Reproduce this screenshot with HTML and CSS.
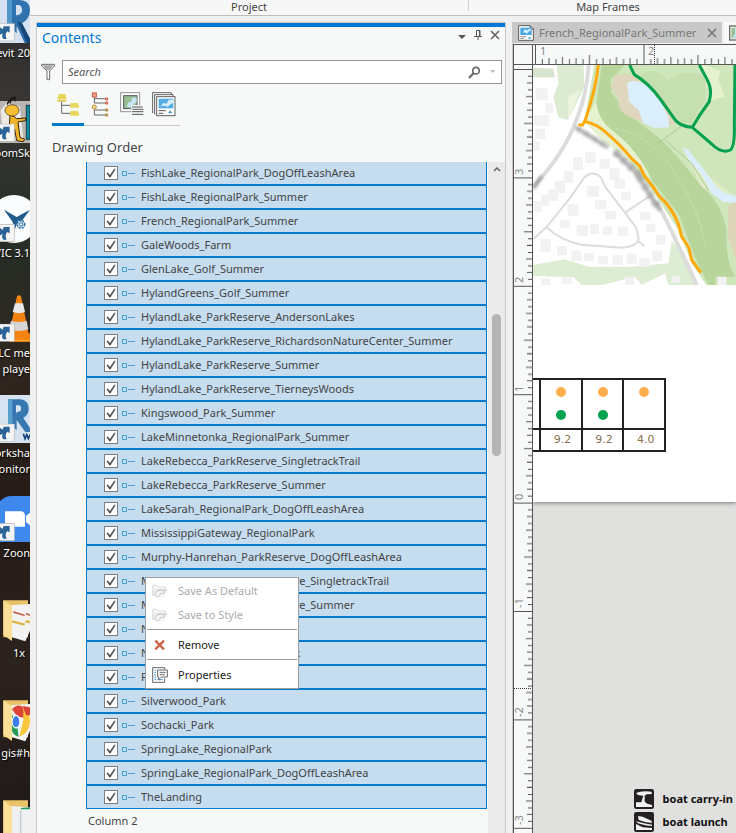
FILE: index.html
```html
<!DOCTYPE html>
<html lang="en">
<head>
<meta charset="utf-8">
<title>Map layout project</title>
<link rel="stylesheet" href="styles.css">
</head>
<body>
<svg class="defs" aria-hidden="true">
  <defs>
    <symbol id="shortcut" viewBox="0 0 45 54">
      <rect x="-10" y="1" width="53" height="52" fill="#f4f4f4" stroke="#b5b5b5" stroke-width="2"/>
      <path d="M0 12 L8 18 L11 9 H29 V28 L22 24 Q13 34 20 47 H10 Q4 40 8 30 L0 34 Z" fill="#2b6397"/>
    </symbol>
    <symbol id="layout-page" viewBox="0 0 48 48">
      <path d="M2 2 H36 L46 12 V46 H2 Z" fill="#fff" stroke="#5c5c5c" stroke-width="3"/>
      <path d="M36 2 V12 H46" fill="none" stroke="#5c5c5c" stroke-width="3"/>
      <rect x="7" y="8" width="34" height="22" fill="#4aa6e0"/>
      <path d="M14 24 L20 13 L28 16 L36 10 L39 16 L32 20 L27 26 L20 22 Z" fill="#d3edfa"/>
      <path d="M7 35 H24 M7 40 H18" stroke="#5c5c5c" stroke-width="2"/>
      <path d="M30 41 L35 34 L40 41 Z" fill="#4aa6e0"/>
    </symbol>
    <symbol id="save-style" viewBox="0 0 48 42">
      <path d="M2 36 V4 H14 L18 9 H40 V16 M2 36 L9 16 H44" fill="#fafafa" stroke="#dcdcdc" stroke-width="3"/>
      <path d="M8 30 Q12 18 26 18 Q38 19 36 28 Q32 32 28 29 Q22 28 24 34 Q22 40 14 38 Q7 36 8 30 Z" fill="#f2f2f2" stroke="#c4c4c4" stroke-width="3"/>
      <path d="M40 12 V28 M33 20 H47 M30 40 L38 32" stroke="#d6d6d6" stroke-width="3"/>
    </symbol>
  </defs>
</svg>

<div class="screen">
  <aside class="desktop" aria-label="Desktop">
    <div class="shortcut">
      <svg viewBox="0 0 90 132" aria-hidden="true">
        <rect y="-12" width="90" height="141" fill="#d5e1f0"/>
        <path d="M22 0 H58 Q90 2 90 30 Q90 56 66 70 L90 116 V129 H74 L50 78 V100 L22 72 Z" fill="#2f72ad"/>
        <path d="M48 15 H58 Q68 20 66 34 Q62 46 48 46 Z" fill="#d5e1f0"/>
        <path d="M22 0 H36 V84 L22 72 Z" fill="#4f97cb"/>
        <path d="M52 64 L66 70 L90 116 V129 H80 Z" fill="#174779"/>
        <use href="#shortcut" x="0" y="70" width="45" height="54"/>
      </svg>
      <span>evit 20</span>
    </div>
    <div class="shortcut">
      <svg viewBox="0 300 90 132" aria-hidden="true">
        <rect y="303" width="90" height="126" fill="#b9b5b1"/>
        <path d="M2 330 L20 310 L60 320 L70 420 L10 420 Z" fill="#ece9e5"/>
        <rect x="79" y="316" width="11" height="102" fill="#138aa0" stroke="#103d49" stroke-width="3"/>
        <path d="M30 345 Q46 350 50 356 L78 354 L76 362 L54 366 L60 412 L74 418 L70 425 L50 422 L44 388 L34 422 L26 418 Z" fill="#f2b52a" stroke="#33230a" stroke-width="3"/>
        <ellipse cx="36" cy="331" rx="21" ry="17" fill="#f7bd33" stroke="#3a2b10" stroke-width="2"/>
        <path d="M22 314 Q25 298 46 291 M30 310 Q34 296 44 293 L46 304" fill="none" stroke="#191410" stroke-width="4"/>
        <use href="#shortcut" x="0" y="371" width="45" height="54"/>
      </svg>
      <span>oomSk</span>
    </div>
    <div class="shortcut">
      <svg viewBox="0 600 90 132" aria-hidden="true">
        <circle cx="42" cy="657" r="72" fill="#fbfcfd"/>
        <path d="M12 629 L50 651 L90 629 L66 662 L54 662 L44 690 L38 666 Z" fill="#215c8d"/>
        <circle cx="63" cy="673" r="11" fill="#e8f2f9" stroke="#2a6ea5" stroke-width="5" stroke-dasharray="6 3"/>
        <circle cx="63" cy="673" r="5" fill="#fff" stroke="#2a6ea5" stroke-width="3"/>
        <use href="#shortcut" x="0" y="672" width="45" height="54"/>
      </svg>
      <span>VIC 3.1</span>
    </div>
    <div class="shortcut">
      <svg viewBox="0 60 90 132" aria-hidden="true">
        <path d="M22 160 H90 V186 H30 Z" fill="#ee7a0b"/>
        <path d="M51 48 Q57 44 63 48 L88 172 Q58 190 26 172 Z" fill="#f58312"/>
        <path d="M45 70 L69 70 L75 96 Q57 103 38 96 Z" fill="#e7e7e7"/>
        <path d="M33 122 Q57 130 80 122 L85 148 Q58 158 27 148 Z" fill="#d5d5d5"/>
        <path d="M44 181 H90" stroke="#ffb43b" stroke-width="3"/>
        <use href="#shortcut" x="0" y="131" width="45" height="54"/>
      </svg>
      <span>LC me</span>
      <span>playe</span>
    </div>
    <div class="shortcut">
      <svg viewBox="0 360 90 132" aria-hidden="true">
        <rect y="345" width="90" height="144" fill="#d7e3f1"/>
        <path d="M24 358 H62 Q86 362 86 386 Q86 404 70 414 L90 444 V456 H76 L50 420 V450 L24 430 Z" fill="#3678af"/>
        <path d="M48 376 H58 Q66 380 62 392 L48 398 Z" fill="#d7e3f1"/>
        <path d="M24 358 H37 V440 L24 430 Z" fill="#57a0d0"/>
        <path d="M70 461 L75 476 L80 464 L85 476 L90 464" fill="none" stroke="#174779" stroke-width="5"/>
        <use href="#shortcut" x="0" y="431" width="45" height="54"/>
      </svg>
      <span>orksha</span>
      <span>onitor</span>
    </div>
    <div class="shortcut">
      <svg viewBox="0 660 90 132" aria-hidden="true">
        <path d="M0 664 Q14 648 36 648 H90 V786 H0 Z" fill="#3f88ee"/>
        <path d="M15 694 H64 Q75 696 75 708 V740 H28 Q15 738 15 726 Z" fill="#fff"/>
        <path d="M78 708 L90 698 V736 L78 726 Z" fill="#fff"/>
        <use href="#shortcut" x="0" y="729" width="45" height="54"/>
      </svg>
      <span>Zoon</span>
    </div>
    <div class="shortcut">
      <svg viewBox="0 120 90 132" aria-hidden="true">
        <path d="M10 121 H84 V232 H10 Z" fill="#e9c268"/>
        <path d="M30 136 L90 132 V212 L76 244 L36 232 Z" fill="#f3f3f3"/>
        <path d="M40 156 L74 166 M78 160 L90 166" stroke="#c2502c" stroke-width="4"/>
        <path d="M36 184 L74 194 M76 184 L90 186" stroke="#dbb646" stroke-width="7"/>
        <path d="M10 121 L36 138 V243 L10 225 Z" fill="#fbdf96"/>
      </svg>
      <span class="mid">1x</span>
    </div>
    <div class="shortcut">
      <svg viewBox="0 420 90 132" aria-hidden="true">
        <path d="M10 421 H84 V532 H10 Z" fill="#e9c268"/>
        <path d="M30 436 L90 432 V512 L76 544 L36 532 Z" fill="#f3f3f3"/>
        <path d="M36 448 Q50 430 68 440 L80 474 L52 470 Z" fill="#dc4437"/>
        <path d="M36 462 L52 500 L56 530 Q40 526 36 512 Z" fill="#239d58"/>
        <path d="M70 444 Q90 450 90 486 Q88 520 58 530 L70 480 Z" fill="#f8c73c"/>
        <path d="M68 438 L90 442 V466 L78 466 Z" fill="#dc4437"/>
        <ellipse cx="48" cy="485" rx="13" ry="21" fill="#fff"/>
        <ellipse cx="48" cy="485" rx="10" ry="17" fill="#3e7ee8"/>
        <path d="M10 421 L36 438 V543 L10 525 Z" fill="#fbdf96"/>
      </svg>
      <span>gis#h</span>
    </div>
    <div class="shortcut">
      <svg viewBox="0 720 90 132" aria-hidden="true">
        <path d="M10 721 H84 V852 H10 Z" fill="#e9c268"/>
        <path d="M32 738 L90 742 V852 H32 Z" fill="#eef0f1"/>
        <path d="M62 744 L90 742 V748 L64 748 Z" fill="#1c9a57"/>
        <path d="M62 752 V852" stroke="#b9c1c5" stroke-width="3"/>
        <path d="M10 721 L36 742 V852 H10 Z" fill="#fbdf96"/>
      </svg>
    </div>
  </aside>

  <main class="app">
    <header class="ribbon">
      <span class="ribbon-group project">Project</span>
      <span class="ribbon-group frames">Map Frames</span>
    </header>

    <div class="workspace">
      <section class="contents" aria-labelledby="contents-title">
        <div class="pane-head">
          <h1 id="contents-title">Contents</h1>
          <div class="pane-tools">
            <button type="button" aria-label="Pane options"><svg width="8" height="12" viewBox="0 0 8 12"><path d="M0 6 H8 L4 10 Z" fill="#555"/></svg></button>
            <button type="button" aria-label="Auto hide"><svg width="8" height="12" viewBox="0 0 8 12"><path d="M2.500 7 V1.500 H6 V7 M5.500 1 V7 M0 7.500 H8 M4 8 V11" fill="none" stroke="#555"/></svg></button>
            <button type="button" aria-label="Close pane"><svg width="10" height="12" viewBox="0 0 10 12"><path d="M1 2 L9 10 M9 2 L1 10" fill="none" stroke="#666" stroke-width="1.700"/></svg></button>
          </div>
        </div>

        <div class="search-row">
          <svg class="funnel" width="14" height="18" viewBox="0 0 42 54" aria-hidden="true"><path d="M2 4 H40 V9 L26 24 V50 H18 V24 L2 9 Z" fill="#fff" stroke="#6b6b6b" stroke-width="3"/><path d="M4 7 H38 L25 22 H18 Z" fill="#a8a9ac"/></svg>
          <div class="search-box">
            <input type="text" placeholder="Search" aria-label="Search">
            <button type="button" aria-label="Run search"><svg width="13" height="13" viewBox="0 0 39 39"><circle cx="24" cy="14" r="10" fill="none" stroke="#666" stroke-width="5"/><path d="M17 21 L3 36" stroke="#666" stroke-width="6"/></svg></button>
            <button type="button" aria-label="Search options"><svg width="5" height="4" viewBox="0 0 5 4"><path d="M0 0 H5 L3 3 Z" fill="#bbb"/></svg></button>
          </div>
        </div>

        <div class="views" role="tablist">
          <button type="button" role="tab" aria-selected="true" aria-label="List by drawing order">
            <svg width="24" height="26" viewBox="0 0 72 78"><path d="M17 30 V67 H44 M17 43 H44" fill="none" stroke="#666" stroke-width="3"/><path d="M8 9 H28 L32 24 H4 Z M44 36 H66 L70 50 H42 Z M44 60 H66 L70 74 H42 Z" fill="#e8d659"/><path d="M4 26 H31 V32 H4 Z" fill="#e1c747"/></svg>
          </button>
          <button type="button" role="tab" aria-selected="false" aria-label="List by source">
            <svg width="24" height="26" viewBox="0 0 72 78"><path d="M19 20 V36 H54 M19 23 H54 M19 56 V72 H54 M19 57 H54" fill="none" stroke="#666" stroke-width="3"/><rect x="13" y="6" width="12" height="12" fill="#f3a48f" stroke="#c9543a" stroke-width="3"/><circle cx="19" cy="48" r="6" fill="#f3dd90" stroke="#bb8c3b" stroke-width="3"/><path d="M53 21 h6 v6 h-6 Z M53 33 h6 v6 h-6 Z" fill="#fbd8ce" stroke="#c9543a" stroke-width="3"/><path d="M53 54 h6 v6 h-6 Z M53 69 h6 v6 h-6 Z" fill="#f8edc9" stroke="#a87b33" stroke-width="3"/></svg>
          </button>
          <button type="button" role="tab" aria-selected="false" aria-label="List map frames">
            <svg width="24" height="26" viewBox="0 0 72 78"><rect x="2" y="5" width="57" height="57" fill="#fff" stroke="#919191" stroke-width="3"/><rect x="11" y="14" width="40" height="39" fill="#96bf93" stroke="#555" stroke-width="3"/><path d="M20 46 L26 34 L34 32 L36 20 H50 V34 L42 38 L30 50 Z" fill="#c7e6f6"/><path d="M34 42 H72 V76 H34 Z" fill="#f7f9f9"/><path d="M36 48 H68 M38 55 H70 M36 62 H70 M36 70 H70" stroke="#555" stroke-width="3"/></svg>
          </button>
          <button type="button" role="tab" aria-selected="false" aria-label="List map series">
            <svg width="24" height="26" viewBox="0 0 72 78"><path d="M2 66 V5 H58 V12 M8 70 V11 H63 V18" fill="#fff" stroke="#5f5f5f" stroke-width="3"/><rect x="14" y="17" width="55" height="57" fill="#fff" stroke="#5f5f5f" stroke-width="3"/><rect x="20" y="23" width="44" height="29" fill="#55aee3"/><path d="M26 46 L34 36 L44 38 L50 26 H64 V36 L52 42 L48 48 L38 44 Z" fill="#d3edfa"/><path d="M20 59 H42 M20 67 H34" stroke="#555" stroke-width="3"/><path d="M48 67 L55 58 L61 67 Z" fill="#3e97cf"/></svg>
          </button>
        </div>

        <h2>Drawing Order</h2>

        <div class="tree">
          <div class="tree-body">
            <ul class="layers">
              <li><label><input type="checkbox" checked><i></i>FishLake_RegionalPark_DogOffLeashArea</label></li>
              <li><label><input type="checkbox" checked><i></i>FishLake_RegionalPark_Summer</label></li>
              <li><label><input type="checkbox" checked><i></i>French_RegionalPark_Summer</label></li>
              <li><label><input type="checkbox" checked><i></i>GaleWoods_Farm</label></li>
              <li><label><input type="checkbox" checked><i></i>GlenLake_Golf_Summer</label></li>
              <li><label><input type="checkbox" checked><i></i>HylandGreens_Golf_Summer</label></li>
              <li><label><input type="checkbox" checked><i></i>HylandLake_ParkReserve_AndersonLakes</label></li>
              <li><label><input type="checkbox" checked><i></i>HylandLake_ParkReserve_RichardsonNatureCenter_Summer</label></li>
              <li><label><input type="checkbox" checked><i></i>HylandLake_ParkReserve_Summer</label></li>
              <li><label><input type="checkbox" checked><i></i>HylandLake_ParkReserve_TierneysWoods</label></li>
              <li><label><input type="checkbox" checked><i></i>Kingswood_Park_Summer</label></li>
              <li><label><input type="checkbox" checked><i></i>LakeMinnetonka_RegionalPark_Summer</label></li>
              <li><label><input type="checkbox" checked><i></i>LakeRebecca_ParkReserve_SingletrackTrail</label></li>
              <li><label><input type="checkbox" checked><i></i>LakeRebecca_ParkReserve_Summer</label></li>
              <li><label><input type="checkbox" checked><i></i>LakeSarah_RegionalPark_DogOffLeashArea</label></li>
              <li><label><input type="checkbox" checked><i></i>MississippiGateway_RegionalPark</label></li>
              <li><label><input type="checkbox" checked><i></i>Murphy-Hanrehan_ParkReserve_DogOffLeashArea</label></li>
              <li><label><input type="checkbox" checked><i></i>Murphy-Hanrehan_ParkReserve_SingletrackTrail</label></li>
              <li><label><input type="checkbox" checked><i></i>Murphy-Hanrehan_ParkReserve_Summer</label></li>
              <li><label><input type="checkbox" checked><i></i>Noerenberg_Gardens</label></li>
              <li><label><input type="checkbox" checked><i></i>NorthMississippi_RegionalPark</label></li>
              <li><label><input type="checkbox" checked><i></i>Parkers_Park</label></li>
              <li><label><input type="checkbox" checked><i></i>Silverwood_Park</label></li>
              <li><label><input type="checkbox" checked><i></i>Sochacki_Park</label></li>
              <li><label><input type="checkbox" checked><i></i>SpringLake_RegionalPark</label></li>
              <li><label><input type="checkbox" checked><i></i>SpringLake_RegionalPark_DogOffLeashArea</label></li>
              <li><label><input type="checkbox" checked><i></i>TheLanding</label></li>
            </ul>
            <p class="column-name">Column 2</p>

            <div class="menu" role="menu">
              <button type="button" role="menuitem" disabled><svg width="16" height="14"><use href="#save-style"/></svg>Save As Default</button>
              <button type="button" role="menuitem" disabled><svg width="16" height="14"><use href="#save-style"/></svg>Save to Style</button>
              <hr>
              <button type="button" role="menuitem"><svg width="16" height="16" viewBox="0 0 48 48"><path d="M10 11 L36 37 M36 11 L10 37" stroke="#cb6546" stroke-width="7"/></svg>Remove</button>
              <hr>
              <button type="button" role="menuitem"><svg width="16" height="16" viewBox="0 0 48 48"><path d="M38 8 V2 H2 V46 H38 V34" fill="#fff" stroke="#666" stroke-width="3"/><path d="M7 10 h5 M7 17 h5 M7 24 h5 M7 31 h5 M7 38 h5 M16 38 h16" stroke="#3e97cf" stroke-width="3"/><path d="M17 9 H46 V30 H28 L20 38 V30 H17 Z" fill="#fff" stroke="#666" stroke-width="3"/><path d="M23 16 H41 M23 23 H38" stroke="#666" stroke-width="3"/></svg>Properties</button>
            </div>
          </div>
          <div class="scrollbar" aria-hidden="true">
            <svg width="8" height="5" viewBox="0 0 8 5"><path d="M1 4 L4 1 L7 4" fill="none" stroke="#666" stroke-width="1.500"/></svg>
            <div class="thumb"></div>
          </div>
        </div>
      </section>

      <section class="document" aria-label="Layout view">
        <div class="doc-tabs" role="tablist">
          <div class="doc-tab" role="tab" aria-selected="true">
            <svg width="16" height="16" aria-hidden="true"><use href="#layout-page"/></svg>
            <span>French_RegionalPark_Summer</span>
            <button type="button" aria-label="Close tab"><svg width="10" height="10" viewBox="0 0 10 10"><path d="M1 1 L9 9 M9 1 L1 9" stroke="#777" stroke-width="1.700"/></svg></button>
          </div>
          <div class="doc-tab next" role="tab" aria-selected="false">
            <svg width="16" height="16" viewBox="0 0 48 48" aria-hidden="true"><rect x="2" y="3" width="44" height="42" fill="#fff" stroke="#666" stroke-width="4"/><rect x="7" y="8" width="34" height="32" fill="#96bf93"/><path d="M10 38 L18 26 V10 L40 8 V38 Z" fill="#c7e6f6"/></svg>
          </div>
        </div>

        <div class="layout-view">
          <div class="corner"></div>
          <svg class="ruler-top" aria-hidden="true">
            <defs>
              <pattern id="ticks-x" x="2" y="0" width="108.500" height="19" patternUnits="userSpaceOnUse">
                <path d="M.5 0 V19 M7.300 14 V19 M14 13 V19 M21 14 V19 M27.500 12 V19 M34.500 14 V19 M41 13 V19 M48 14 V19 M54.500 10 V19 M61.500 14 V19 M68 13 V19 M75 14 V19 M81.500 12 V19 M88.500 14 V19 M95 13 V19 M102 14 V19" stroke="#555"/>
              </pattern>
            </defs>
            <rect width="100%" height="19" fill="url(#ticks-x)"/>
            <path d="M121.500 0 V19" stroke="#333" stroke-dasharray="1 1"/>
            <text x="7" y="10">1</text>
            <text x="115" y="10">2</text>
          </svg>
          <svg class="ruler-left" aria-hidden="true">
            <defs>
              <pattern id="ticks-y" x="0" y="4" width="19" height="108.400" patternUnits="userSpaceOnUse">
                <path d="M0 .5 H19 M14 7.300 H19 M13 14 H19 M14 21 H19 M12 27.500 H19 M14 34.500 H19 M13 41 H19 M14 48 H19 M10 54.500 H19 M14 61.500 H19 M13 68 H19 M14 75 H19 M12 81.500 H19 M14 88.500 H19 M13 95 H19 M14 102 H19" stroke="#555"/>
              </pattern>
            </defs>
            <rect width="19" height="100%" fill="url(#ticks-y)"/>
            <path d="M0 623.500 H19" stroke="#333" stroke-dasharray="1 1"/>
            <text transform="translate(9 110) rotate(-90)">3</text>
            <text transform="translate(9 218) rotate(-90)">2</text>
            <text transform="translate(9 327) rotate(-90)">1</text>
            <text transform="translate(9 435) rotate(-90)">0</text>
            <text transform="translate(9 543) rotate(-90)">-1</text>
            <text transform="translate(9 652) rotate(-90)">-2</text>
            <text transform="translate(9 760) rotate(-90)">-3</text>
          </svg>

          <div class="canvas">
            <div class="page">
              <svg class="map" viewBox="84 195 609 660" preserveAspectRatio="xMinYMin slice" role="img" aria-label="Park trail map">
                <defs>
                  <filter id="soft" x="-20%" y="-20%" width="140%" height="140%"><feGaussianBlur stdDeviation="4"/></filter>
                  <filter id="haze"><feGaussianBlur stdDeviation="2"/></filter>
                </defs>
                <rect x="84" y="195" width="609" height="660" fill="#fff"/>
                <path d="M268 195 H693 V855 H604 L560 790 L520 690 L455 590 L330 430 L238 362 Z" fill="#cfe6bb"/>
                <path d="M236 362 L276 300 L300 350 L400 420 L440 540 L400 500 L290 420 Z" fill="#e6f1cf"/>
                <g filter="url(#haze)">
                  <path d="M290 195 L274 310 Q280 360 320 390 Q400 450 440 540 L520 640 L570 770 L610 855 H632 V830 L690 830 Q660 780 665 690 Q650 610 590 560 Q520 470 470 420 L380 350 L320 280 L316 240 L360 195 Z" fill="#b8d59c"/>
                  <path d="M330 225 Q380 215 400 240 L480 320 L510 370 L480 384 L420 370 L375 350 Q330 330 345 300 L318 262 Z" fill="#e0d5bd"/>
                  <path d="M400 230 Q440 190 490 240 Q540 200 600 230 L600 300 L560 370 L520 366 L470 296 Z" fill="#c5dfae"/>
                  <path d="M583 195 H650 L640 240 L660 290 L620 300 L600 240 Z" fill="#e4f2cd"/>
                  <path d="M600 195 L650 215 L693 300 V195 Z" fill="#d0e7bb"/>
                  <path d="M530 440 L600 520 L693 590 V620 L650 590 L590 560 Z" fill="#dfebc4"/>
                  <path d="M670 620 L693 600 V780 L668 710 Z" fill="#ded5b8"/>
                  <path d="M155 195 H236 L238 260 L210 320 L188 360 L160 352 L145 290 L160 250 Z" fill="#dcebd2"/>
                  <path d="M84 203 L144 206 L150 232 L84 232 Z" fill="#d6e5cf"/>
                  <path d="M84 795 L180 778 L250 800 L380 800 L490 790 L500 724 L540 760 L570 855 H490 L480 820 L410 855 L390 830 L290 855 H230 L205 832 L84 828 Z" fill="#ddedd4"/>
                  <path d="M190 290 L226 270 L190 360 Z" fill="#edf4dd"/>
                </g>
                <path d="M366 250 Q385 235 410 250 L440 258 L470 310 L490 352 L492 382 L450 384 L415 370 L400 330 L372 305 Z" fill="#daeefb"/>
                <path d="M532 440 L550 450 L598 510 L632 558 L660 580 L693 588 V608 L655 606 L620 580 L590 524 L552 480 Z" fill="#daeefb"/>
                <g fill="none" stroke="#c6deae" stroke-width="3"><path d="M330 385 Q450 410 510 520 Q590 640 600 740"/><path d="M460 430 L540 370 M480 420 L560 490 L610 570" stroke="#acca91"/></g>
                <g fill="#f2f2f2">
                  <path d="M92 265h36v36h-36Z M121 309h24v30h-24Z M86 346h46v32h-46Z M90 386h30v32h-30Z M84 424h20v28h-20Z M240 457h32v32h-32Z M204 472h30v38h-30Z M284 476h30v30h-30Z M178 513h26v35h-26Z M246 558h36v32h-36Z M150 542h30v37h-30Z M313 503h30v36h-30Z M129 568h30v35h-30Z M86 603h24v34h-24Z M108 585h24v32h-24Z M188 612h32v35h-32Z M270 601h34v26h-34Z M328 538h32v28h-32Z M348 575h30v26h-30Z M300 632h32v26h-32Z M165 660h30v24h-30Z M405 637h32v24h-32Z M256 672h26v30h-26Z M215 676h34v32h-34Z M293 680h28v26h-28Z M338 680h30v28h-30Z M423 672h28v24h-28Z M454 704h28v30h-28Z M106 717h32v38h-32Z M156 738h30v28h-30Z M199 752h30v30h-30Z M238 760h28v24h-28Z M279 767h30v26h-30Z M322 766h32v28h-32Z M442 752h30v32h-30Z M365 761h30v30h-30Z M403 774h32v26h-32Z M108 835h28v20h-28Z M170 832h30v20h-30Z M360 832h28v22h-28Z M638 830h26v25h-26Z M500 828h26v20h-26Z"/>
                </g>
                <g fill="none" stroke="#dcdcdc" stroke-linejoin="round">
                  <path d="M251 195 Q246 280 218 350 Q180 460 84 560" stroke-width="12"/>
                  <path d="M84 718 L124 682 L192 598 L238 532 Q260 510 286 530 L302 562 L360 638 L394 684 L401 718 Q396 740 350 743 L230 734 Q170 724 124 682 M360 638 L432 590 M398 722 L418 738" stroke-width="6"/>
                  <path d="M456 606 L496 686 L576 855" stroke-width="12"/>
                </g>
                <g fill="none" stroke="#888" stroke-linecap="round" filter="url(#soft)" opacity=".7">
                  <path d="M218 386 L306 440" stroke-width="15" stroke-dasharray="7 21"/>
                  <path d="M218 386 L306 440 M334 460 L400 524 M404 534 L462 628 M88 562 L108 532" stroke-width="11"/>
                  <path d="M334 460 L400 524 M404 534 L462 628" stroke-width="20" stroke-dasharray="5 24"/>
                </g>
                <g fill="none" stroke="#ffa90a" stroke-width="9" stroke-linejoin="round">
                  <path d="M280 195 Q272 270 240 362 L232 376 L220 373 M240 364 Q280 374 306 400 Q350 438 380 476 L404 498 L420 530 L444 560 L462 588 Q500 620 520 672 L530 710 L552 744 L560 780 L588 818"/>
                </g>
                <g fill="none" stroke="#05a04e" stroke-width="9" stroke-linejoin="round">
                  <path d="M374 195 L388 224 Q430 248 468 300 L512 362 Q530 380 562 382 M583 195 L606 238 Q624 270 612 306 Q586 340 562 382 L620 432 Q650 462 676 450 Q690 440 688 370 L690 195"/>
                </g>
              </svg>

              <table class="trails">
                <tbody>
                  <tr class="marks">
                    <td></td>
                    <td><span class="dot orange"></span><span class="dot green"></span></td>
                    <td><span class="dot orange"></span><span class="dot green"></span></td>
                    <td><span class="dot orange"></span></td>
                  </tr>
                  <tr class="miles"><td></td><td>9.2</td><td>9.2</td><td>4.0</td></tr>
                </tbody>
              </table>
            </div>

            <ul class="legend">
              <li><svg width="20" height="20" viewBox="0 0 60 60" aria-hidden="true"><rect width="60" height="60" rx="7" fill="#252122"/><path d="M6 12 Q24 4 52 8 L54 15 L38 16 L32 20 V38 L40 44 L54 48 V54 H6 V40 L22 40 L28 20 L12 18 Z" fill="#f2f2f2"/></svg>boat carry-in</li>
              <li><svg width="20" height="20" viewBox="0 0 60 60" aria-hidden="true"><rect width="60" height="60" rx="7" fill="#252122"/><path d="M12 12 L26 14 L52 26 L54 33 L34 30 L14 24 Z M6 28 L30 34 L54 38 V42 L34 40 L12 34 Z M6 36 L26 46 L54 48 V54 H6 Z" fill="#f2f2f2"/></svg>boat launch</li>
            </ul>
          </div>
        </div>
      </section>
    </div>
  </main>
</div>
</body>
</html>
```

FILE: styles.css
```css
* {
  box-sizing: border-box;
}

body {
  margin: 0;
  font: 11px/16px "Noto Sans", "Open Sans", sans-serif;
  color: #444;
  background: #f0f0f0;
}

button {
  margin: 0;
  padding: 0;
  border: 0;
  background: none;
  font: inherit;
  color: inherit;
}

svg {
  display: block;
  flex: none;
}

h1, h2, p, ul {
  margin: 0;
  padding: 0;
  font-weight: 400;
  list-style: none;
}

.defs {
  position: absolute;
  width: 0;
  height: 0;
}

.screen {
  display: grid;
  grid-template-columns: 30px 1fr;
  height: 100vh;
  overflow: hidden;
}

/* Desktop strip */
.desktop {
  overflow: hidden;
  background: linear-gradient(175deg, #2c2c2a, #393735 12%, #262d26 30%, #30261f 45%, #241b17 60%, #2c221e 80%, #1e1917);
}

.shortcut {
  display: flex;
  flex-direction: column;
  align-items: flex-end;
  height: 100px;
  color: #fff;
  text-shadow: 1px 1px 2px #000;
}

.shortcut svg {
  width: 30px;
  height: 44px;
  margin-bottom: 1px;
  overflow: visible;
}

.shortcut span {
  white-space: nowrap;
}

.shortcut .mid {
  padding-right: 5px;
}

/* Application frame */
.app {
  display: flex;
  flex-direction: column;
  min-width: 0;
  min-height: 0;
}

.ribbon {
  display: flex;
  height: 16px;
  background: #f7f7f7;
  border-bottom: 1px solid #bdbdbd;
}

.ribbon-group {
  line-height: 14px;
  text-align: center;
}

.project {
  width: 439px;
  height: 11px;
  border-right: 1px solid #d0d0d0;
}

.frames {
  flex: 1;
  padding-left: 11px;
}

.workspace {
  display: grid;
  grid-template-columns: 470px 1fr;
  gap: 6px;
  flex: 1;
  min-height: 0;
  padding: 6px 0 0 6px;
}

/* Contents pane */
.contents {
  display: flex;
  flex-direction: column;
  min-height: 0;
  background: #f7f9f9;
  border: 1px solid #c8c8c8;
  border-bottom: 0;
}

.pane-head {
  display: flex;
  justify-content: space-between;
  height: 37px;
  padding: 0 5px;
  border-top: 4px solid #0077d4;
}

.pane-head h1 {
  font-size: 14px;
  line-height: 21px;
  color: #0077d4;
}

.pane-tools {
  display: flex;
  gap: 8px;
  height: 16px;
}

.search-row {
  display: flex;
  align-items: center;
  gap: 7px;
  padding: 0 3px 0 4px;
}

.search-box {
  display: flex;
  align-items: center;
  gap: 9px;
  flex: 1;
  height: 24px;
  padding: 0 6px 0 5px;
  border: 1px solid #949494;
  background: #fff;
}

.search-box input {
  flex: 1;
  min-width: 0;
  padding: 0;
  border: 0;
  outline: 0;
  font: inherit;
  background: none;
}

.search-box input::placeholder {
  font-style: italic;
  color: #555;
}

.views {
  display: flex;
  align-self: flex-start;
  margin: 7px 0 0 15px;
  border-bottom: 1px solid #c8c8c8;
}

.views button {
  display: flex;
  justify-content: center;
  width: 32px;
  height: 34px;
}

.views button[aria-selected="true"] {
  border-bottom: 3px solid #0079c8;
  height: 35px;
  margin-bottom: -1px;
}

.contents h2 {
  padding: 11px 15px 5px;
  font-size: 13px;
  line-height: 20px;
}

.tree {
  display: flex;
  flex: 1;
  min-height: 0;
  overflow: hidden;
}

.tree-body {
  position: relative;
  flex: 1;
  padding: 0 1px 0 49px;
}

/* The list is scrolled, so its first edge lies above the view. */
.layers {
  margin-top: -1px;
}

.layers li {
  height: 24px;
  border: 1px solid #007ac8;
  background: #c6dcef;
}

.layers label {
  display: flex;
  align-items: center;
  height: 22px;
  padding-left: 17px;
  white-space: nowrap;
}

.layers input {
  appearance: none;
  width: 14px;
  height: 14px;
  margin: 0 4px 0 0;
  border: 1px solid #7f7f7f;
  background: #fff;
}

.layers input::before {
  content: "";
  display: block;
  width: 12px;
  height: 12px;
}

.layers input:checked::before {
  background: #555;
  clip-path: polygon(12% 52%, 22% 44%, 41% 66%, 78% 12%, 88% 18%, 45% 88%, 37% 88%);
}

.layers i {
  display: flex;
  align-items: center;
  width: 13px;
  height: 5px;
  margin-right: 6px;
}

.layers i::before {
  content: "";
  box-sizing: border-box;
  width: 5px;
  height: 5px;
  border: 1px solid #4aa3dc;
  margin-right: 1px;
}

.layers i::after {
  content: "";
  width: 7px;
  height: 1px;
  background: #4aa3dc;
}

.column-name {
  padding: 4px 2px;
}

.menu {
  position: absolute;
  left: 108px;
  top: 415px;
  width: 154px;
  padding: 1px;
  border: 1px solid #9e9e9e;
  background: #fff;
  color: #222;
}

.menu button {
  display: flex;
  align-items: center;
  gap: 10px;
  width: 100%;
  height: 24px;
  padding-left: 5px;
}

.menu button:disabled {
  color: #ababab;
}

.menu hr {
  height: 1px;
  margin: 2px 0 3px;
  border: 0;
  background: #999;
}

.scrollbar {
  display: flex;
  flex-direction: column;
  align-items: center;
  width: 17px;
  padding-top: 5px;
  background: #eaeaea;
}

.thumb {
  width: 9px;
  height: 142px;
  margin-top: 142px;
  border-radius: 5px;
  background: #b4b4b4;
}

/* Layout view */
.document {
  display: flex;
  flex-direction: column;
  min-width: 0;
  min-height: 0;
  border-left: 1px solid #c8c8c8;
}

.doc-tabs {
  display: flex;
  gap: 2px;
  height: 22px;
  overflow: hidden;
}

.doc-tab {
  display: flex;
  align-items: center;
  gap: 5px;
  flex: none;
  height: 21px;
  padding: 0 5px;
  background: #c8c8c8;
  color: #777;
}

.doc-tab button {
  margin-left: 6px;
}

.doc-tab.next {
  background: #f7f9f9;
}

.layout-view {
  display: grid;
  grid-template-columns: 20px 1fr;
  grid-template-rows: 21px 1fr;
  flex: 1;
  min-height: 0;
  background: #f7f9f9;
}

.corner,
.ruler-top {
  border-top: 1px solid #555;
  border-bottom: 1px solid #555;
}

.corner,
.ruler-left {
  border-left: 1px solid #555;
  border-right: 1px solid #555;
}

.ruler-top {
  width: 100%;
  height: 21px;
}

.ruler-left {
  width: 20px;
  height: 100%;
}

.layout-view text {
  font-size: 11px;
  fill: #888;
}

.canvas {
  display: flex;
  flex-direction: column;
  min-width: 0;
  min-height: 0;
  overflow: hidden;
  background: #e0e0df;
}

.page {
  padding-bottom: 50px;
  background: #fff;
  box-shadow: 0 1px 4px #777;
}

.map {
  width: 100%;
  height: 220px;
}

.trails {
  width: 133px;
  margin-top: 93px;
  table-layout: fixed;
  border-collapse: collapse;
  font: 11px/16px "DejaVu Sans", sans-serif;
  color: #8a7350;
}

.trails td {
  width: 41px;
  padding: 0;
  border: 2px solid #222;
  text-align: center;
}

.trails td:first-child {
  width: 7px;
  border-left: 0;
}

.marks td {
  height: 50px;
  padding-top: 7px;
  vertical-align: top;
}

.miles td {
  height: 22px;
  padding-left: 3px;
}

.dot {
  display: block;
  width: 10px;
  height: 10px;
  margin: 0 auto;
  border-radius: 50%;
}

.dot + .dot {
  margin-top: 13px;
}

.orange {
  background: #ffad4d;
}

.green {
  background: #00a14f;
}

.legend {
  align-self: flex-end;
  display: grid;
  gap: 3px;
  margin-top: auto;
  padding: 0 3px 1px 0;
  font-weight: 700;
  line-height: 20px;
  color: #111;
}

.legend li {
  display: flex;
  gap: 9px;
}
```
